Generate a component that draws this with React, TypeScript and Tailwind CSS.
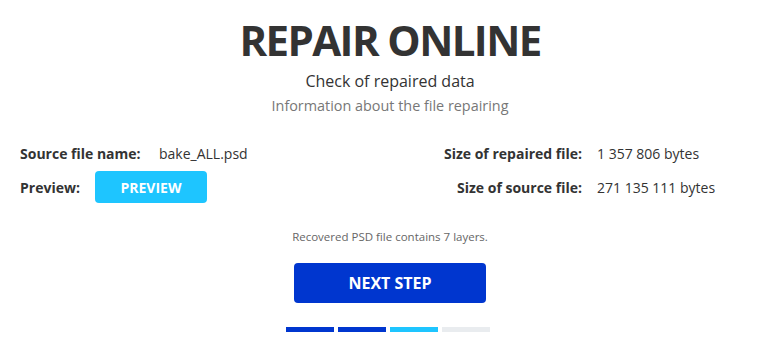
import React from "react";

export default function App() {
  return (
    <div
      className="w-full h-[351px] overflow-hidden bg-white pl-[18px] text-[#333]"
      style={{ fontFamily: '"Open Sans", sans-serif' }}
    >
      <div className="flex flex-col items-center">
        <h1 className="mt-[19px] text-[42px] leading-[42px] font-bold tracking-[-1.6px] text-[#333]">
          REPAIR ONLINE
        </h1>
        <div className="mt-[9px] text-[16px] leading-[22px] text-[#333]">Check of repaired data</div>
        <div className="mt-[4px] text-[14.4px] leading-[20px] text-[#777]">Information about the file repairing</div>
      </div>

      <div className="mt-[27px] grid grid-cols-[363px_1fr] gap-y-[8px] text-[14px]">
        <div className="pl-[2px] flex items-center h-[20px]">
          <span className="w-[139px] font-bold">Source file name:</span>
          <span>bake_ALL.psd</span>
        </div>
        <div className="flex items-center h-[20px]">
          <span className="w-[201px] text-right font-bold">Size of repaired file:</span>
          <span className="ml-[15px]">1 357 806 bytes</span>
        </div>
        <div className="pl-[2px] flex items-center h-[32px]">
          <span className="w-[75px] font-bold">Preview:</span>
          <button className="w-[112px] h-[32px] rounded-[4px] bg-[#1ec5ff] text-white font-bold text-[14px]">
            PREVIEW
          </button>
        </div>
        <div className="flex items-center h-[32px]">
          <span className="w-[201px] text-right font-bold">Size of source file:</span>
          <span className="ml-[15px]">271 135 111 bytes</span>
        </div>
      </div>

      <div className="flex flex-col items-center">
        <div className="mt-[26px] text-[11.5px] leading-[15px] text-[#666]">
          Recovered PSD file contains 7 layers.
        </div>
        <button className="mt-[19px] w-[192px] h-[40px] rounded-[4px] bg-[#0036cf] text-white font-bold text-[16px]">
          NEXT STEP
        </button>
        <div className="mt-[24px] mr-[4px] flex gap-[4px]">
          <div className="w-[48px] h-[5px] bg-[#0036cf]" />
          <div className="w-[48px] h-[5px] bg-[#0036cf]" />
          <div className="w-[48px] h-[5px] bg-[#1ec5ff]" />
          <div className="w-[48px] h-[5px] bg-[#e9ecef]" />
        </div>
      </div>
    </div>
  );
}
